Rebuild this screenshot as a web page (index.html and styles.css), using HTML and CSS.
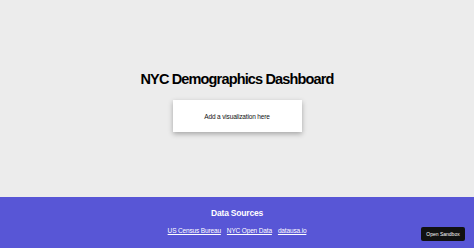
FILE: index.html
```html
<!DOCTYPE html>
<html>
<head>
  <title>NYC Demographics Dashboard</title>
  <link rel="stylesheet" href="styles.css">
</head>
<body>
  <div class="main">
    <h1>NYC Demographics Dashboard</h1>
    <div class="card">Add a visualization here</div>
  </div>

  <footer class="footer">
    <h2>Data Sources</h2>
    <div class="links">
      <a href="#">US Census Bureau</a>
      <a href="#">NYC Open Data</a>
      <a href="#">datausa.io</a>
    </div>
  </footer>

  <button class="sandbox">Open Sandbox</button>
</body>
</html>
```

FILE: styles.css
```css
body {
  margin: 0;
  height: 248px;
  overflow: hidden;
  background-color: #ececec;
  font-family: "Liberation Sans", Arial, sans-serif;
}

.main {
  height: 197px;
  display: flex;
  flex-direction: column;
  align-items: center;
  padding-top: 71px;
  box-sizing: border-box;
}

h1 {
  margin: 0 0 13px 0;
  font-size: 14.5px;
  letter-spacing: -0.85px;
  font-weight: bold;
  color: #000;
}

.card {
  width: 129px;
  height: 32px;
  background-color: #fff;
  display: flex;
  align-items: center;
  justify-content: center;
  font-size: 6.5px;
  letter-spacing: -0.15px;
  color: #111;
  box-shadow: 0 2px 5px rgba(0, 0, 0, 0.3);
}

.footer {
  height: 51px;
  background-color: #5856d6;
  color: #fff;
  text-align: center;
  padding-top: 11px;
  box-sizing: border-box;
}

h2 {
  margin: 0 0 9px 0;
  font-size: 8.5px;
  letter-spacing: -0.2px;
  font-weight: bold;
}

.links {
  display: flex;
  justify-content: center;
  gap: 6px;
}

.links a {
  color: #fff;
  font-size: 6.5px;
  letter-spacing: -0.15px;
}

.sandbox {
  position: absolute;
  left: 421px;
  top: 227px;
  width: 44px;
  height: 14px;
  padding: 0;
  border: none;
  border-radius: 2px;
  background-color: #111;
  color: #fff;
  font-family: "Liberation Sans", Arial, sans-serif;
  font-size: 5px;
}
```
